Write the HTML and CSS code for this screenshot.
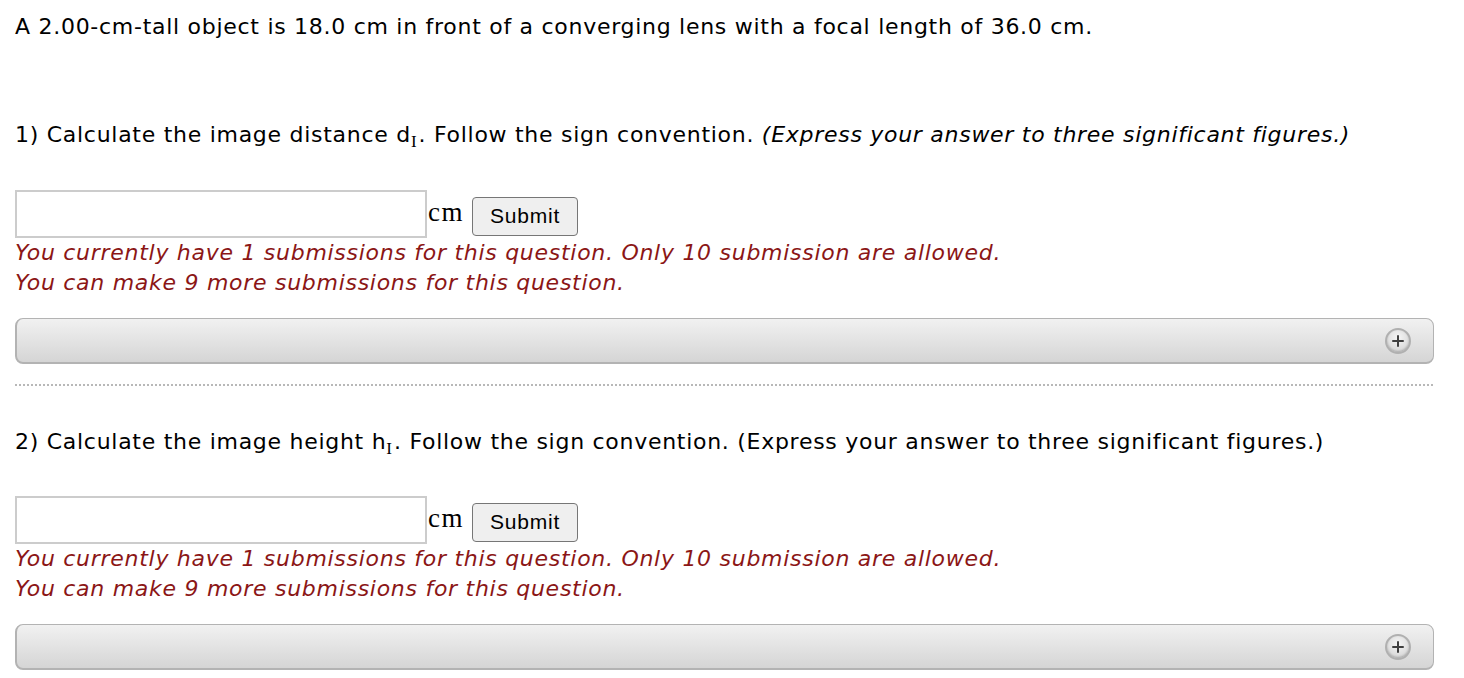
FILE: index.html
```html
<!DOCTYPE html>
<html>
<head>
<meta charset="utf-8">
<title>Converging lens</title>
<link rel="stylesheet" href="styles.css">
</head>
<body>
<div class="page">
  <p class="intro">A 2.00-cm-tall object is 18.0 cm in front of a converging lens with a focal length of 36.0 cm.</p>

  <section class="question q1">
    <p class="qtext">1) Calculate the image distance d<sub class="sub">I</sub>. Follow the sign convention. <em>(Express your answer to three significant figures.)</em></p>
    <div class="answer-row">
      <input class="answer" type="text">
      <span class="unit">cm</span>
      <button class="submit" type="button">Submit</button>
    </div>
    <p class="notice">You currently have 1 submissions for this question. Only 10 submission are allowed.<br>You can make 9 more submissions for this question.</p>
    <div class="hintbar"><span class="plus"></span></div>
  </section>

  <div class="divider"></div>

  <section class="question q2">
    <p class="qtext">2) Calculate the image height h<sub class="sub">I</sub>. Follow the sign convention. (Express your answer to three significant figures.)</p>
    <div class="answer-row">
      <input class="answer" type="text">
      <span class="unit">cm</span>
      <button class="submit" type="button">Submit</button>
    </div>
    <p class="notice">You currently have 1 submissions for this question. Only 10 submission are allowed.<br>You can make 9 more submissions for this question.</p>
    <div class="hintbar"><span class="plus"></span></div>
  </section>
</div>
</body>
</html>
```
FILE: styles.css
```css
html, body {
  margin: 0;
  padding: 0;
  background: #fff;
}
.page {
  width: 1419px;
  padding: 12px 0 0 15px;
  font-family: "DejaVu Sans", Verdana, sans-serif;
  font-size: 22px;
  letter-spacing: 0.72px;
  color: #000;
}
.intro {
  margin: 0;
  line-height: 30px;
  white-space: nowrap;
}
.question {
  display: flex;
  flex-direction: column;
}
.q1 {
  margin-top: 78px;
}
.qtext {
  margin: 0;
  line-height: 30px;
  white-space: nowrap;
}
.qtext em {
  font-style: italic;
}
.sub {
  font-family: "Liberation Serif", "Times New Roman", serif;
  font-size: 17px;
  letter-spacing: 0;
  vertical-align: -5px;
  line-height: 0;
  margin-right: 2px;
}
.answer-row {
  margin-top: 40px;
  display: flex;
  align-items: center;
  height: 48px;
}
.answer {
  box-sizing: border-box;
  width: 412px;
  height: 48px;
  margin: 0;
  border: 2px solid #cccccc;
  background: #fff;
  padding: 0 6px;
  font-size: 18px;
  outline: none;
}
.unit {
  font-family: "Liberation Serif", "Times New Roman", serif;
  font-size: 27px;
  letter-spacing: 1.5px;
  margin-left: 1px;
  margin-top: -4px;
}
.submit {
  box-sizing: border-box;
  margin-left: 8px;
  margin-top: 4px;
  width: 106px;
  height: 39px;
  padding: 0;
  background: #efefef;
  border: 1px solid #767676;
  border-radius: 4px;
  font-family: "Liberation Sans", Arial, Helvetica, sans-serif;
  font-size: 21px;
  letter-spacing: 0.8px;
  color: #000;
}
.notice {
  margin: 0;
  color: #8b1616;
  font-style: italic;
  line-height: 30px;
  white-space: nowrap;
}
.hintbar {
  box-sizing: border-box;
  margin-top: 20px;
  height: 46px;
  border: 1px solid #b3b3b3;
  border-left-width: 2px;
  border-bottom-width: 2px;
  border-radius: 8px;
  background: linear-gradient(#f1f1f1, #d5d5d5);
  display: flex;
  align-items: center;
  justify-content: flex-end;
  padding-right: 22px;
}
.plus {
  position: relative;
  box-sizing: border-box;
  width: 26px;
  height: 26px;
  border-radius: 50%;
  border: 2px solid #b0b0b0;
  background: radial-gradient(circle at 50% 35%, #f6f6f6 0%, #dedede 60%, #c8c8c8 100%);
  box-shadow: inset 0 -1px 2px rgba(0,0,0,0.2);
}
.plus::before,
.plus::after {
  content: "";
  position: absolute;
  background: #3f3f3f;
  border-radius: 1px;
}
.plus::before {
  left: 5px;
  right: 5px;
  top: 10px;
  height: 2px;
}
.plus::after {
  top: 5px;
  bottom: 5px;
  left: 10px;
  width: 2px;
}
.divider {
  margin-top: 20px;
  height: 2px;
  background-image: linear-gradient(to right, #b8b8b8 0, #b8b8b8 2px, transparent 2px, transparent 4px);
  background-size: 4px 2px;
}
.q2 {
  margin-top: 41px;
}
.q2 .answer-row {
  margin-top: 39px;
}
```
